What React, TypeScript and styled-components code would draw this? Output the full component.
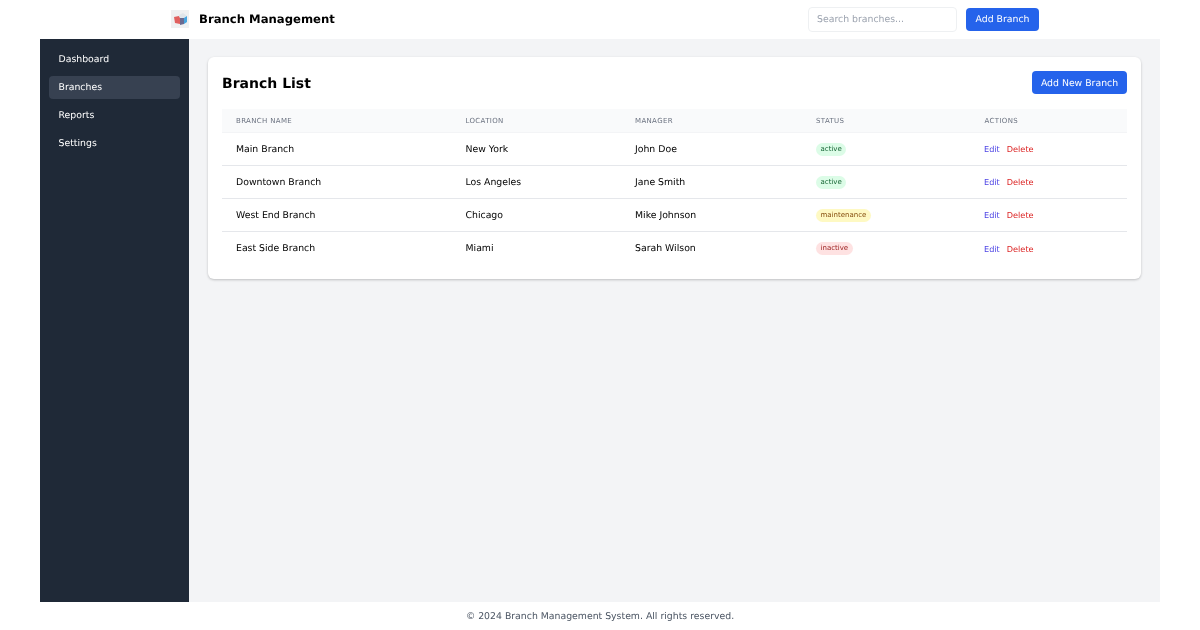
import React from 'react';
import styled, { createGlobalStyle } from 'styled-components';

const Global = createGlobalStyle`
  html, body { margin: 0; padding: 0; background: #fff; }
  body { font-family: "DejaVu Sans", sans-serif; color: #000; text-rendering: geometricPrecision; -webkit-font-smoothing: antialiased; }
  * { box-sizing: border-box; }
  input, button { text-rendering: geometricPrecision; }
`;
const Page = styled.div`width: 1200px; height: 630px; display: flex; flex-direction: column; overflow: hidden; filter: blur(0.3px);`;
const Header = styled.header`height: 39px; padding: 7px 161px 0 171px; display: flex; justify-content: space-between; align-items: flex-start;`;
const Brand = styled.div`display: flex; align-items: center; gap: 10px; height: 24px;`;
const Title = styled.h1`margin: 0; font-size: 11.67px; font-weight: 700; line-height: 24px;`;
const HeaderActions = styled.div`display: flex; gap: 9px; align-items: center;`;
const Search = styled.input`
  width: 149px; height: 25px; border: 1px solid #eef0f2; border-radius: 4px; padding: 0 8px;
  font: 9.33px "DejaVu Sans", sans-serif; outline: none; background: #fff;
  &::placeholder { color: #9ca3af; opacity: 1; }
`;
const Button = styled.button<{ $w: number; $h: number; $size: number; $pt?: number }>`
  width: ${p => p.$w}px; height: ${p => p.$h}px; border: 0; border-radius: 4px; background: #2563eb; color: #fff;
  font: ${p => p.$size}px "DejaVu Sans", sans-serif; padding: ${p => p.$pt ?? 0}px 0 0;
`;
const Body = styled.div`flex: 1; margin: 0 40px; display: flex; min-height: 0;`;
const Sidebar = styled.nav`width: 149px; background: #1f2937; padding: 9px; display: flex; flex-direction: column; gap: 5px;`;
const NavItem = styled.a<{ $active?: boolean }>`
  height: 23px; line-height: 24px; padding: 0 9.5px; border-radius: 4px; color: #fff; font-size: 9.33px;
  background: ${p => (p.$active ? '#374151' : 'transparent')};
`;
const Main = styled.main`flex: 1; background: #f3f4f6; padding: 18px 19px;`;
const Card = styled.section`background: #fff; border-radius: 6px; padding: 14px; height: 222px; box-shadow: 0 1px 3px rgba(0,0,0,.15), 0 1px 2px rgba(0,0,0,.08);`;
const CardHead = styled.div`display: flex; justify-content: space-between; align-items: center; height: 23px; margin-bottom: 15px;`;
const CardTitle = styled.h2`margin: 0; padding-top: 2px; font-size: 14px; font-weight: 700;`;
const Grid = styled.div`display: grid; grid-template-columns: 229.5px 169.5px 181px 168.5px 1fr;`;
const HeadRow = styled(Grid)`height: 24px; background: #f9fafb; border-bottom: 1px solid #f3f4f6; align-items: center;`;
const HeadCell = styled.div`padding-left: 14px; font-size: 7px; letter-spacing: 0.35px; color: #6b7280; text-transform: uppercase;`;
const Row = styled(Grid)`height: 33px; border-bottom: 1px solid #e5e7eb; align-items: center; &:last-child { border-bottom: 0; }`;
const Cell = styled.div`padding-left: 14px; font-size: 9.33px; display: flex; align-items: center;`;
const statusColors: Record<string, [string, string]> = {
  active: ['#dcfce7', '#166534'], maintenance: ['#fef9c3', '#854d0e'], inactive: ['#fee2e2', '#991b1b'],
};
const Badge = styled.span<{ $s: string }>`
  padding: 0 4.5px; height: 13px; line-height: 13.5px; border-radius: 7px; font-size: 7px;
  background: ${p => statusColors[p.$s][0]}; color: ${p => statusColors[p.$s][1]};
`;
const ActionCell = styled(Cell)`padding-left: 13.5px;`;
const Action = styled.a<{ $c: string }>`font-size: 8.17px; color: ${p => p.$c}; margin-right: 7px;`;
const Footer = styled.footer`height: 28px; line-height: 29px; text-align: center; font-size: 9.33px; color: #4b5563;`;

const Logo = () => (
  <svg width="18" height="18" viewBox="0 0 18 18">
    <rect width="18" height="18" fill="#eff0f1" />
    <path d="M3 7l5-1 1 2v6l-5-1z" fill="#e0605f" />
    <path d="M8 5l4-2 4 3-3 2-4 0z" fill="#dfe5ea" />
    <path d="M9 8h4v6l-4 1z" fill="#6a6a90" />
    <path d="M13 8l3-2v6l-3 2z" fill="#45a5e0" />
  </svg>
);

const rows = [
  ['Main Branch', 'New York', 'John Doe', 'active'],
  ['Downtown Branch', 'Los Angeles', 'Jane Smith', 'active'],
  ['West End Branch', 'Chicago', 'Mike Johnson', 'maintenance'],
  ['East Side Branch', 'Miami', 'Sarah Wilson', 'inactive'],
];

export default function App() {
  return (
    <Page>
      <Global />
      <Header>
        <Brand><Logo /><Title>Branch Management</Title></Brand>
        <HeaderActions>
          <Search placeholder="Search branches..." />
          <Button $w={73} $h={23} $size={9.33}>Add Branch</Button>
        </HeaderActions>
      </Header>
      <Body>
        <Sidebar>
          <NavItem>Dashboard</NavItem>
          <NavItem $active>Branches</NavItem>
          <NavItem>Reports</NavItem>
          <NavItem>Settings</NavItem>
        </Sidebar>
        <Main>
          <Card>
            <CardHead>
              <CardTitle>Branch List</CardTitle>
              <Button $w={95} $h={23} $size={9.33} $pt={2}>Add New Branch</Button>
            </CardHead>
            <HeadRow>
              {['Branch Name', 'Location', 'Manager', 'Status', 'Actions'].map(h => <HeadCell key={h}>{h}</HeadCell>)}
            </HeadRow>
            {rows.map(r => (
              <Row key={r[0]}>
                <Cell>{r[0]}</Cell>
                <Cell>{r[1]}</Cell>
                <Cell>{r[2]}</Cell>
                <Cell><Badge $s={r[3]}>{r[3]}</Badge></Cell>
                <ActionCell><Action $c="#4f46e5">Edit</Action><Action $c="#dc2626">Delete</Action></ActionCell>
              </Row>
            ))}
          </Card>
        </Main>
      </Body>
      <Footer>© 2024 Branch Management System. All rights reserved.</Footer>
    </Page>
  );
}
